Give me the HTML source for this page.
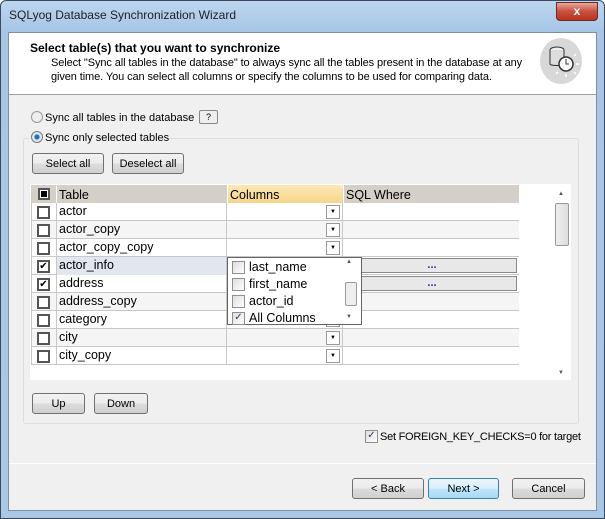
<!DOCTYPE html>
<html><head><style>
*{box-sizing:border-box;margin:0;padding:0}
body{width:605px;height:519px;overflow:hidden;background:#fff;font-family:"Liberation Sans",sans-serif;font-size:11px;color:#000;position:relative}
.a{position:absolute}
.frame{left:0;top:0;width:605px;height:519px;background:linear-gradient(180deg,#bcd6ef 0,#a7c6e6 30px,#a9c8e6 100%);border:1px solid #3a4a5c;border-radius:6px 6px 0 0}
.client{left:8px;top:32px;width:589px;height:479px;background:#f0f0f0;border:1px solid #7d8fa3}
.btn{position:absolute;height:21px;border:1px solid #707070;border-radius:3px;background:linear-gradient(#f2f2f2 0,#ebebeb 50%,#dddddd 51%,#cfcfcf 100%);text-align:center;line-height:20px;font-size:11px}
.cb{position:absolute;width:13px;height:13px;border:1px solid #8f8f8f;background:linear-gradient(135deg,#ddd,#fff)}
.gcb{position:absolute;left:6px;top:3px;width:13px;height:13px;border:2px solid #555;background:#fff}
.row{position:absolute;left:31px;width:488px;height:18px;border-bottom:1px solid #c8c8c8}
.row div{position:absolute;top:0;height:18px;border-right:1px solid #c8c8c8;line-height:17px;font-size:12.5px;padding-left:2px}
.dd{position:absolute;right:2px;top:2px;width:14px;height:14px;border:1px solid #999;background:#fff;font-size:6px;text-align:center;line-height:13px}
</style></head><body>
<div class="a frame"></div>
<div class="a" style="left:9px;top:8px;font-size:12px;color:#222">SQLyog Database Synchronization Wizard</div>
<div class="a" style="left:556px;top:2px;width:42px;height:19px;border:1px solid #6b2a22;border-radius:0 0 4px 4px;background:linear-gradient(#e6a79c,#c9503e 50%,#b8321f);color:#fff;font-weight:bold;text-align:center;line-height:17px;font-size:12px">x</div>
<div class="a client"></div>
<div class="a" style="left:9px;top:33px;width:587px;height:62px;background:#fff;border-bottom:1px solid #a0a0a0"></div>
<div class="a" style="left:30px;top:41px;font-weight:bold;font-size:12px">Select table(s) that you want to synchronize</div>
<div class="a" style="left:51px;top:56px;font-size:11px;line-height:14px;width:500px;letter-spacing:-0.1px">Select "Sync all tables in the database" to always sync all the tables present in the database at any</div>
<div class="a" style="left:51px;top:71px;font-size:11px;letter-spacing:-0.1px">given time. You can select all columns or specify the columns to be used for comparing data.</div>
<div class="a" style="left:540px;top:38px;width:42px;height:46px;border-radius:50%;background:#d8d8d8"></div>
<svg class="a" style="left:546px;top:44px" width="34" height="36"><ellipse cx="11" cy="6" rx="7" ry="3" fill="#eee" stroke="#333"/><path d="M4 6v14c0 2 14 2 14 0V6" fill="#ddd" stroke="#333"/><circle cx="20" cy="20" r="7" fill="#fff" stroke="#333" stroke-width="1.5"/><path d="M20 15v5h3" stroke="#333" fill="none"/><path d="M30 20h3M20 30v3M28 12l2-2M28 28l2 2M12 28l-2 2" stroke="#fff" stroke-width="1.5"/></svg>
<div class="a" style="left:31px;top:111px;width:12px;height:12px;border-radius:50%;border:1px solid #999;background:#eee"></div>
<div class="a" style="left:45px;top:112px">Sync all tables in the database</div>
<div class="a" style="left:199px;top:110px;width:19px;height:14px;border:1px solid #888;border-radius:2px;background:#eee;font-size:9px;text-align:center;line-height:12px">?</div>
<div class="a" style="left:23px;top:138px;width:556px;height:286px;border:1px solid #d5dfe5;border-radius:3px"></div>
<div class="a" style="left:29px;top:131px;width:140px;height:14px;background:#f0f0f0"></div>
<div class="a" style="left:31px;top:131px;width:12px;height:12px;border-radius:50%;border:1px solid #777;background:radial-gradient(#1f6fb5 2px,#cfe3f4 3px,#eee 5px)"></div>
<div class="a" style="left:45px;top:132px">Sync only selected tables</div>
<div class="btn" style="left:32px;top:153px;width:72px">Select all</div>
<div class="btn" style="left:112px;top:153px;width:72px">Deselect all</div>
<div class="a" style="left:30px;top:184px;width:541px;height:196px;background:#fff"></div>
<div class="a" style="left:31px;top:185px;width:488px;height:18px;background:#d4d0c8"></div>
<div class="a" style="left:31px;top:185px;width:26px;height:18px;background:#d4d0c8;border-right:1px solid #fff"><div style="position:absolute;left:7px;top:3px;width:12px;height:12px;border:2px solid #555;background:#fff"><div style="margin:1px;width:6px;height:6px;background:#000"></div></div></div>
<div class="a" style="left:59px;top:188px;font-size:12.5px;line-height:14px">Table</div>
<div class="a" style="left:227px;top:185px;width:116px;height:18px;background:linear-gradient(#fce8b4,#f6d68a);border-left:1px solid #fff"></div>
<div class="a" style="left:230px;top:188px;font-size:12.5px;line-height:14px">Columns</div>
<div class="a" style="left:343px;top:185px;width:1px;height:18px;background:#fff"></div>
<div class="a" style="left:346px;top:188px;font-size:12.5px;line-height:14px">SQL Where</div>

<div class="row" style="top:203px"><div style="left:0;width:26px"><span class="gcb"></span></div><div style="left:26px;width:170px">actor</div><div style="left:196px;width:116px;padding:0"><span class="dd">▼</span></div></div>
<div class="row" style="top:221px;background:#f5f5f5"><div style="left:0;width:26px"><span class="gcb"></span></div><div style="left:26px;width:170px">actor_copy</div><div style="left:196px;width:116px;padding:0"><span class="dd">▼</span></div></div>
<div class="row" style="top:239px"><div style="left:0;width:26px"><span class="gcb"></span></div><div style="left:26px;width:170px">actor_copy_copy</div><div style="left:196px;width:116px;padding:0"><span class="dd">▼</span></div></div>
<div class="row" style="top:257px"><div style="left:0;width:26px"><span class="gcb" style="font-size:10px;line-height:9px;text-align:center">✔</span></div><div style="left:26px;width:170px;background:#e2e6ef">actor_info</div><div style="left:196px;width:116px"></div><div style="left:312px;width:176px;padding:0;border:none"><div style="position:absolute;left:2px;top:1px;width:172px;height:15px;border:1px solid #888;background:#e8e8e8;color:#1a3aa0;text-align:center;line-height:12px;font-size:11px;font-weight:bold">...</div></div></div>
<div class="row" style="top:275px"><div style="left:0;width:26px"><span class="gcb" style="font-size:10px;line-height:9px;text-align:center">✔</span></div><div style="left:26px;width:170px">address</div><div style="left:196px;width:116px"></div><div style="left:312px;width:176px;padding:0;border:none"><div style="position:absolute;left:2px;top:1px;width:172px;height:15px;border:1px solid #888;background:#e8e8e8;color:#1a3aa0;text-align:center;line-height:12px;font-size:11px;font-weight:bold">...</div></div></div>
<div class="row" style="top:293px;background:#f5f5f5"><div style="left:0;width:26px"><span class="gcb"></span></div><div style="left:26px;width:170px">address_copy</div><div style="left:196px;width:116px"></div></div>
<div class="row" style="top:311px"><div style="left:0;width:26px"><span class="gcb"></span></div><div style="left:26px;width:170px">category</div><div style="left:196px;width:116px;padding:0"><span class="dd">▼</span></div></div>
<div class="row" style="top:329px;background:#f5f5f5"><div style="left:0;width:26px"><span class="gcb"></span></div><div style="left:26px;width:170px">city</div><div style="left:196px;width:116px;padding:0"><span class="dd">▼</span></div></div>
<div class="row" style="top:347px"><div style="left:0;width:26px"><span class="gcb"></span></div><div style="left:26px;width:170px">city_copy</div><div style="left:196px;width:116px;padding:0"><span class="dd">▼</span></div></div>
<div class="a" style="left:31px;top:203px;width:1px;height:162px;background:#c8c8c8"></div>

<div class="a" style="left:227px;top:257px;width:135px;height:68px;background:#fff;border:1px solid #646464"></div>
<div class="cb" style="left:232px;top:261px"></div><div class="a" style="left:249px;top:260px;font-size:12.5px">last_name</div>
<div class="cb" style="left:232px;top:278px"></div><div class="a" style="left:249px;top:277px;font-size:12.5px">first_name</div>
<div class="cb" style="left:232px;top:295px"></div><div class="a" style="left:249px;top:294px;font-size:12.5px">actor_id</div>
<div class="cb" style="left:232px;top:312px;color:#335;font-size:10px;line-height:10px;text-align:center">✓</div><div class="a" style="left:249px;top:311px;font-size:12.5px">All Columns</div>
<div class="a" style="left:346px;top:259px;font-size:6px;color:#555">▲</div>
<div class="a" style="left:345px;top:282px;width:12px;height:24px;border:1px solid #999;border-radius:2px;background:#eee"></div>
<div class="a" style="left:346px;top:314px;font-size:6px;color:#555">▼</div>

<div class="a" style="left:558px;top:191px;font-size:6px;color:#555">▲</div>
<div class="a" style="left:555px;top:203px;width:14px;height:43px;border:1px solid #999;border-radius:2px;background:linear-gradient(90deg,#eee,#ddd)"></div>
<div class="a" style="left:558px;top:370px;font-size:6px;color:#555">▼</div>

<div class="btn" style="left:32px;top:393px;width:53px">Up</div>
<div class="btn" style="left:94px;top:393px;width:54px">Down</div>
<div class="cb" style="left:365px;top:430px;color:#335;font-size:10px;line-height:10px;text-align:center">✓</div>
<div class="a" style="left:380px;top:431px;letter-spacing:-0.25px">Set FOREIGN_KEY_CHECKS=0 for target</div>
<div class="a" style="left:9px;top:463px;width:587px;height:1px;background:#a0a0a0;border-bottom:1px solid #fff"></div>
<div class="btn" style="left:352px;top:478px;width:72px">&lt; Back</div>
<div class="btn" style="left:428px;top:478px;width:71px;border-color:#3c7fb1;background:linear-gradient(#eaf6fd,#d9f0fc 50%,#bee6fd 51%,#a7d9f5)">Next &gt;</div>
<div class="btn" style="left:512px;top:478px;width:73px">Cancel</div>
</body></html>
